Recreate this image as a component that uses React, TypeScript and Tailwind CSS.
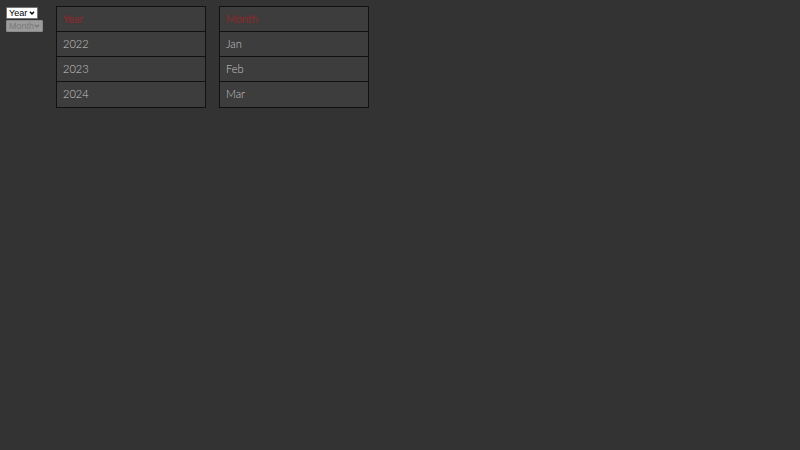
const years = ['2022', '2023', '2024'];
const months = ['Jan', 'Feb', 'Mar'];

const Column = ({ title, items }: { title: string; items: string[] }) => (
  <div className="w-[150px] border border-[#111] flex flex-col">
    <div className="h-[25px] flex items-center px-[6px] bg-[#3d3d3d] border-b border-[#111] text-[#a3262c] text-[11px] [text-shadow:0_0_2px_rgba(163,38,44,0.7)]">
      {title}
    </div>
    {items.map((item, i) => (
      <div
        key={item}
        className={`h-[25px] flex items-center px-[6px] bg-[#3d3d3d] text-[#c8c8c8] text-[11px] ${
          i < items.length - 1 ? 'border-b border-[#111]' : ''
        }`}
      >
        {item}
      </div>
    ))}
  </div>
);

const Chevron = ({ color }: { color: string }) => (
  <svg
    viewBox="0 0 8 6"
    className="absolute right-[3px] top-[4px] w-[6px] h-[4px] pointer-events-none"
    fill="none"
    stroke={color}
    strokeWidth="2"
  >
    <path d="M1 1.2 L4 4.4 L7 1.2" />
  </svg>
);

export default function App() {
  return (
    <div className="min-h-[450px] w-full bg-[#333333] font-['Lato',sans-serif] font-light">
      <div className="flex items-start pt-[6px] pl-[6px]">
        <div className="flex flex-col items-start gap-[1px] pt-[1px] w-[50px]">
          <div className="relative">
            <select className="appearance-none block w-[32px] h-[12px] pl-[2px] pr-[6px] py-0 bg-white text-black text-[9px] font-['Liberation_Sans',sans-serif] font-normal border border-[#767676] rounded-[1px] leading-none">
              <option>Year</option>
            </select>
            <Chevron color="#000" />
          </div>
          <div className="relative">
            <select
              disabled
              className="appearance-none block w-[37px] h-[12px] pl-[2px] pr-[6px] py-0 bg-[#9c9c9c] text-[#7a7a7a] text-[9px] font-['Liberation_Sans',sans-serif] font-normal border border-[#8a8a8a] rounded-[1px] leading-none"
            >
              <option>Month</option>
            </select>
            <Chevron color="#777" />
          </div>
        </div>
        <div className="flex gap-[13px]">
          <Column title="Year" items={years} />
          <Column title="Month" items={months} />
        </div>
      </div>
    </div>
  );
}
